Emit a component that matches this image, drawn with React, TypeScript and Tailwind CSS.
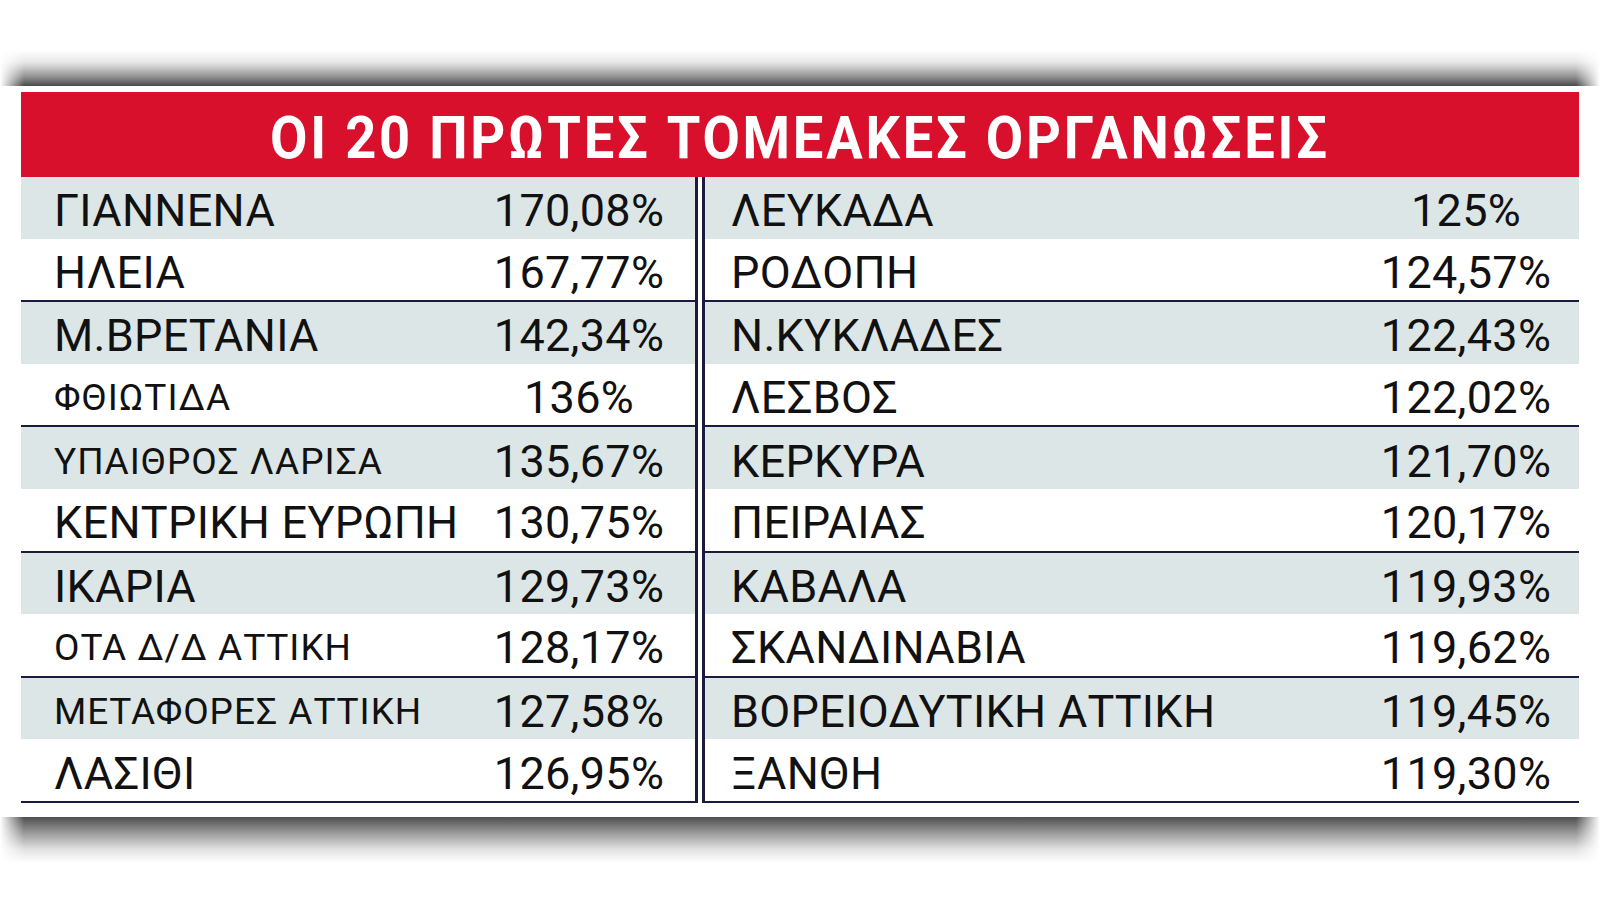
type Row = { name: string; value: string; small?: boolean };

const leftRows: Row[] = [
  { name: "ΓΙΑΝΝΕΝΑ", value: "170,08%" },
  { name: "ΗΛΕΙΑ", value: "167,77%" },
  { name: "Μ.ΒΡΕΤΑΝΙΑ", value: "142,34%" },
  { name: "ΦΘΙΩΤΙΔΑ", value: "136%", small: true },
  { name: "ΥΠΑΙΘΡΟΣ ΛΑΡΙΣΑ", value: "135,67%", small: true },
  { name: "ΚΕΝΤΡΙΚΗ ΕΥΡΩΠΗ", value: "130,75%" },
  { name: "ΙΚΑΡΙΑ", value: "129,73%" },
  { name: "ΟΤΑ Δ/Δ ΑΤΤΙΚΗ", value: "128,17%", small: true },
  { name: "ΜΕΤΑΦΟΡΕΣ ΑΤΤΙΚΗ", value: "127,58%", small: true },
  { name: "ΛΑΣΙΘΙ", value: "126,95%" },
];

const rightRows: Row[] = [
  { name: "ΛΕΥΚΑΔΑ", value: "125%" },
  { name: "ΡΟΔΟΠΗ", value: "124,57%" },
  { name: "Ν.ΚΥΚΛΑΔΕΣ", value: "122,43%" },
  { name: "ΛΕΣΒΟΣ", value: "122,02%" },
  { name: "ΚΕΡΚΥΡΑ", value: "121,70%" },
  { name: "ΠΕΙΡΑΙΑΣ", value: "120,17%" },
  { name: "ΚΑΒΑΛΑ", value: "119,93%" },
  { name: "ΣΚΑΝΔΙΝΑΒΙΑ", value: "119,62%" },
  { name: "ΒΟΡΕΙΟΔΥΤΙΚΗ ΑΤΤΙΚΗ", value: "119,45%" },
  { name: "ΞΑΝΘΗ", value: "119,30%" },
];

function Column({ rows, padLeft, numCell }: { rows: Row[]; padLeft: string; numCell: string }) {
  const pairs: Row[][] = [];
  for (let i = 0; i < rows.length; i += 2) pairs.push(rows.slice(i, i + 2));

  return (
    <div className="flex flex-col">
      {pairs.map((pair, i) => (
        <div key={i} className="flex flex-col">
          {pair.map((r, j) => (
            <div
              key={r.name}
              className={`flex h-[61.6px] items-center pt-[6px] ${padLeft} ${j === 0 ? "bg-[#dce6e6]" : "bg-white"}`}
            >
              <span
                className={`flex-1 whitespace-nowrap text-[#111] ${r.small ? "text-[37px] tracking-[1px]" : "text-[45px] tracking-[0.3px]"}`}
              >
                {r.name}
              </span>
              <span className={`${numCell} text-center text-[45px] tracking-[0.3px] text-[#111]`}>
                {r.value}
              </span>
            </div>
          ))}
          <div className="h-[2px] bg-[#1b1b3d]" />
        </div>
      ))}
    </div>
  );
}

export default function App() {
  return (
    <div
      className="h-[900px] w-full overflow-hidden bg-white pt-[50px] leading-none"
      style={{ fontFamily: "Roboto, 'Noto Sans', sans-serif" }}
    >
      {/* top shadow */}
      <div className="h-[36px] bg-[linear-gradient(to_bottom,#ffffff_0%,#e8e8e8_33%,#c8c8c8_50%,#909090_75%,#4a4a4a_100%)] [mask-image:linear-gradient(to_right,transparent,black_24px,black_calc(100%-24px),transparent)]" />

      <div className="bg-white px-[21px] pt-[6px] pb-[14px]">
        <div className="flex h-[85px] items-center justify-center bg-[#d8102b] pt-[6px]">
          <h1 className="scale-x-[0.92] text-[59px] font-bold tracking-[3px] whitespace-nowrap text-white">
            ΟΙ 20 ΠΡΩΤΕΣ ΤΟΜΕΑΚΕΣ ΟΡΓΑΝΩΣΕΙΣ
          </h1>
        </div>

        <div className="flex">
          <div className="w-[674px]">
            <Column rows={leftRows} padLeft="pl-[33px]" numCell="w-[216px] pr-[16px]" />
          </div>
          <div className="flex w-[10px] justify-between">
            <div className="w-[3px] bg-[#1b1b3d]" />
            <div className="w-[3px] bg-[#1b1b3d]" />
          </div>
          <div className="flex-1">
            <Column rows={rightRows} padLeft="pl-[26px]" numCell="w-[214px] pr-[12px]" />
          </div>
        </div>
      </div>

      {/* bottom shadow */}
      <div className="h-[46px] bg-[linear-gradient(to_bottom,#4f4f4f_0%,#9a9a9a_35%,#e2e2e2_70%,#ffffff_100%)] [mask-image:linear-gradient(to_right,transparent,black_24px,black_calc(100%-24px),transparent)]" />
    </div>
  );
}
